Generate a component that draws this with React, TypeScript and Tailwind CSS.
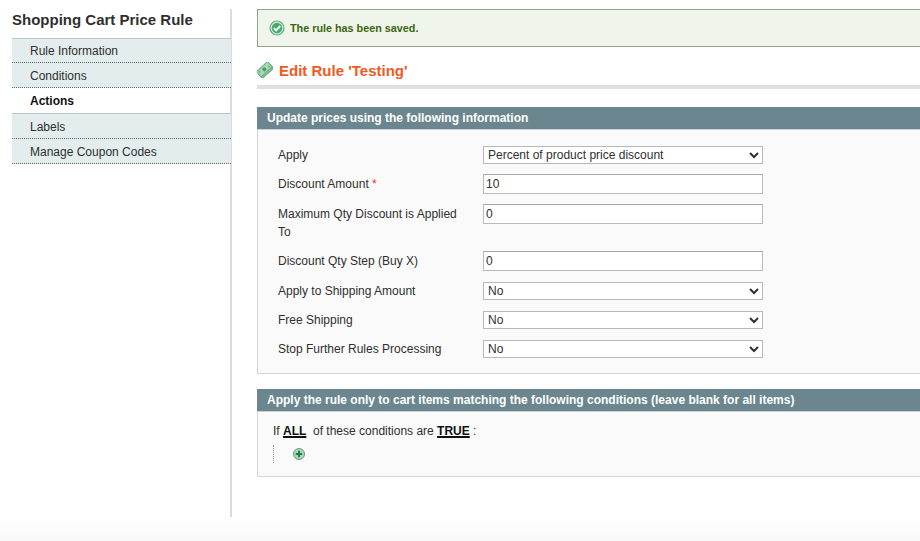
const font = { fontFamily: '"Liberation Sans", Arial, sans-serif' };

function MoneyIcon() {
  return (
    <svg width="16" height="16" viewBox="0 0 16 16" className="shrink-0 mt-[1px]">
      <g transform="rotate(-42 8 8)">
        <rect x="0.5" y="6.5" width="15" height="6" fill="#86c596" stroke="#6aa97c" strokeWidth="1" />
        <rect x="0.5" y="3.5" width="15" height="7" fill="#a8d9b2" stroke="#6aa97c" strokeWidth="1" />
        <circle cx="8" cy="7" r="2" fill="#4f9a68" />
        <rect x="2" y="5" width="1.5" height="1.5" fill="#6aa97c" />
        <rect x="12.5" y="7.5" width="1.5" height="1.5" fill="#6aa97c" />
      </g>
    </svg>
  );
}

function SuccessIcon() {
  return (
    <svg width="16" height="16" viewBox="0 0 16 16" className="shrink-0">
      <circle cx="8" cy="8" r="7" fill="#d3ecd9" stroke="#5fae7a" strokeWidth="1.2" />
      <circle cx="8" cy="8" r="5.2" fill="#45ab67" />
      <path d="M4.9 8.1 L7.2 10.4 L11.2 6" fill="none" stroke="#ffffff" strokeWidth="1.9" />
    </svg>
  );
}

function AddIcon() {
  return (
    <svg width="12" height="12" viewBox="0 0 12 12">
      <circle cx="6" cy="6" r="5.5" fill="#b3d2bd" stroke="#6b9a7e" strokeWidth="1" />
      <path d="M6 2.8 V9.2 M2.8 6 H9.2" stroke="#1c8442" strokeWidth="2" />
    </svg>
  );
}

const navClass =
  "pl-[18px] pt-[1px] flex items-center bg-[#e3eded] border-b border-dotted border-[#5f6b6b] text-[12px] text-[#2f2f2f]";

function FormRow({ label, required, children, className, labelPad }: { label: string; required?: boolean; children: React.ReactNode; className: string; labelPad?: boolean }) {
  return (
    <div className={"flex " + className}>
      <div className={"w-[205px] pr-[20px] text-[12px] leading-[18px] text-[#2f2f2f] " + (labelPad ? "pt-[1px]" : "")}>
        {label}
        {required && <span className="text-[#eb340a]"> *</span>}
      </div>
      {children}
    </div>
  );
}

function Sel({ value }: { value: string }) {
  return (
    <select
      defaultValue={value}
      className="w-[280px] h-[18px] bg-white border border-[#b8b8b8] text-[12px] text-[#2f2f2f] appearance-auto"
      style={font}
    >
      <option>{value}</option>
    </select>
  );
}

function Inp({ value }: { value: string }) {
  return (
    <input
      readOnly
      value={value}
      className="w-[280px] h-[20px] bg-white border border-[#bbbbbb] border-t-[#a8a8a8] text-[12px] text-[#2f2f2f] px-[2px] outline-none"
      style={font}
    />
  );
}

function Head({ children }: { children: React.ReactNode }) {
  return (
    <div className="h-[23px] bg-[#6b868e] border-b border-[#c8d2d4] pl-[10px] flex items-center text-[12px] font-bold text-white">
      {children}
    </div>
  );
}

export default function App() {
  return (
    <div className="w-[920px] h-[541px] overflow-hidden bg-white relative" style={font}>
      <div className="flex pl-[12px] pt-[9px]">
        <aside className="w-[220px] h-[508px] shrink-0 border-r-2 border-[#dcdcdc]">
          <div className="h-[29px] pb-[6px] flex items-center text-[15px] font-bold text-[#2f2f2f]">Shopping Cart Price Rule</div>
          <div className="border-t border-[#bcc5c5] -mr-[1px]">
            <div className={navClass + " h-[24px]"}>Rule Information</div>
            <div className={navClass + " h-[25px]"}>Conditions</div>
          </div>
          <div className="h-[25px] pl-[18px] pt-[1px] flex items-center text-[12px] font-bold text-[#111]">Actions</div>
          <div className="border-t border-[#bcc5c5] -mr-[1px]">
            <div className={navClass + " h-[25px]"}>Labels</div>
            <div className={navClass + " h-[25px]"}>Manage Coupon Codes</div>
          </div>
        </aside>
        <main className="ml-[25px] w-[680px] shrink-0">
          <div className="h-[38px] border border-[#95a486] bg-[#eff5ea] flex items-center pl-[11px] gap-[5px]">
            <SuccessIcon />
            <span className="text-[10.8px] font-bold text-[#3d6611]">The rule has been saved.</span>
          </div>
          <div className="mt-[14px] h-[28px] border-b-4 border-[#dfdfdf] flex items-start gap-[6px]">
            <MoneyIcon />
            <span className="text-[15px] font-bold text-[#f05a22] leading-[20px]">Edit Rule 'Testing'</span>
          </div>
          <div className="mt-[18px]">
            <Head>Update prices using the following information</Head>
            <div className="h-[244px] border-x border-b border-[#d6d6d6] bg-[#fafafa] pl-[20px] pt-[16px]">
              <FormRow label="Apply" className="h-[28px]"><Sel value="Percent of product price discount" /></FormRow>
              <FormRow label="Discount Amount" required labelPad className="h-[30px]"><Inp value="10" /></FormRow>
              <FormRow label="Maximum Qty Discount is Applied To" labelPad className="h-[47px]"><Inp value="0" /></FormRow>
              <FormRow label="Discount Qty Step (Buy X)" labelPad className="h-[31px]"><Inp value="0" /></FormRow>
              <FormRow label="Apply to Shipping Amount" className="h-[29px]"><Sel value="No" /></FormRow>
              <FormRow label="Free Shipping" className="h-[29px]"><Sel value="No" /></FormRow>
              <FormRow label="Stop Further Rules Processing" className="h-[29px]"><Sel value="No" /></FormRow>
            </div>
          </div>
          <div className="mt-[15px]">
            <Head>Apply the rule only to cart items matching the following conditions (leave blank for all items)</Head>
            <div className="h-[65px] border-x border-b border-[#d6d6d6] bg-[#fafafa] pl-[15px] pt-[11px] text-[12px] text-[#2f2f2f]">
              <div className="leading-[16px] whitespace-pre">
                If <b className="underline decoration-[1.5px] text-[#111]">ALL</b>{"  "}of these conditions are <b className="underline decoration-[1.5px] text-[#111]">TRUE</b> :
              </div>
              <div className="mt-[6px] h-[18px] border-l border-dotted border-[#999] pl-[19px] pt-[3px]">
                <AddIcon />
              </div>
            </div>
          </div>
        </main>
      </div>
      <div className="absolute left-0 right-0 bottom-0 h-[20px] bg-gradient-to-b from-white to-[#f8f8f8]" />
    </div>
  );
}
